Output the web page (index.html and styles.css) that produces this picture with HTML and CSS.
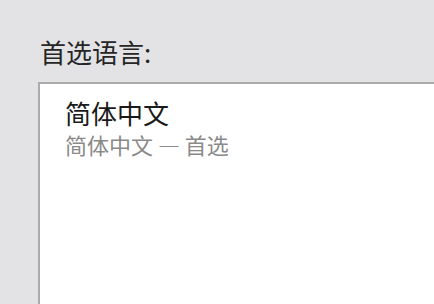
FILE: index.html
```html
<!DOCTYPE html>
<html lang="zh-CN">
<head>
<meta charset="utf-8">
<link rel="stylesheet" href="styles.css">
</head>
<body>
<div class="pane">
  <div class="label">首选语言:</div>
  <div class="list">
    <div class="item">
      <div class="item-title">简体中文</div>
      <div class="item-sub">简体中文 — 首选</div>
    </div>
  </div>
</div>
</body>
</html>
```
FILE: styles.css
```css
html, body {
  margin: 0;
  padding: 0;
  height: 100%;
  overflow: hidden;
}
body {
  background: #e3e3e5;
  font-family: "Noto Sans CJK SC", "Noto Sans", sans-serif;
}
.pane {
  display: flex;
  flex-direction: column;
  padding: 38px 0 0 38px;
  height: 100%;
  box-sizing: border-box;
}
.label {
  font-size: 26px;
  line-height: 28px;
  color: #262626;
  padding-left: 2px;
  margin-bottom: 16px;
}
.list {
  flex: 1;
  background: #fff;
  border-top: 2px solid #ababab;
  border-left: 2px solid #ababab;
  padding: 14px 0 0 25px;
}
.item-title {
  font-size: 26px;
  line-height: 30px;
  color: #1a1a1a;
}
.item-sub {
  font-size: 22px;
  line-height: 26px;
  color: #8a8a8a;
  margin-top: 3px;
}
```
